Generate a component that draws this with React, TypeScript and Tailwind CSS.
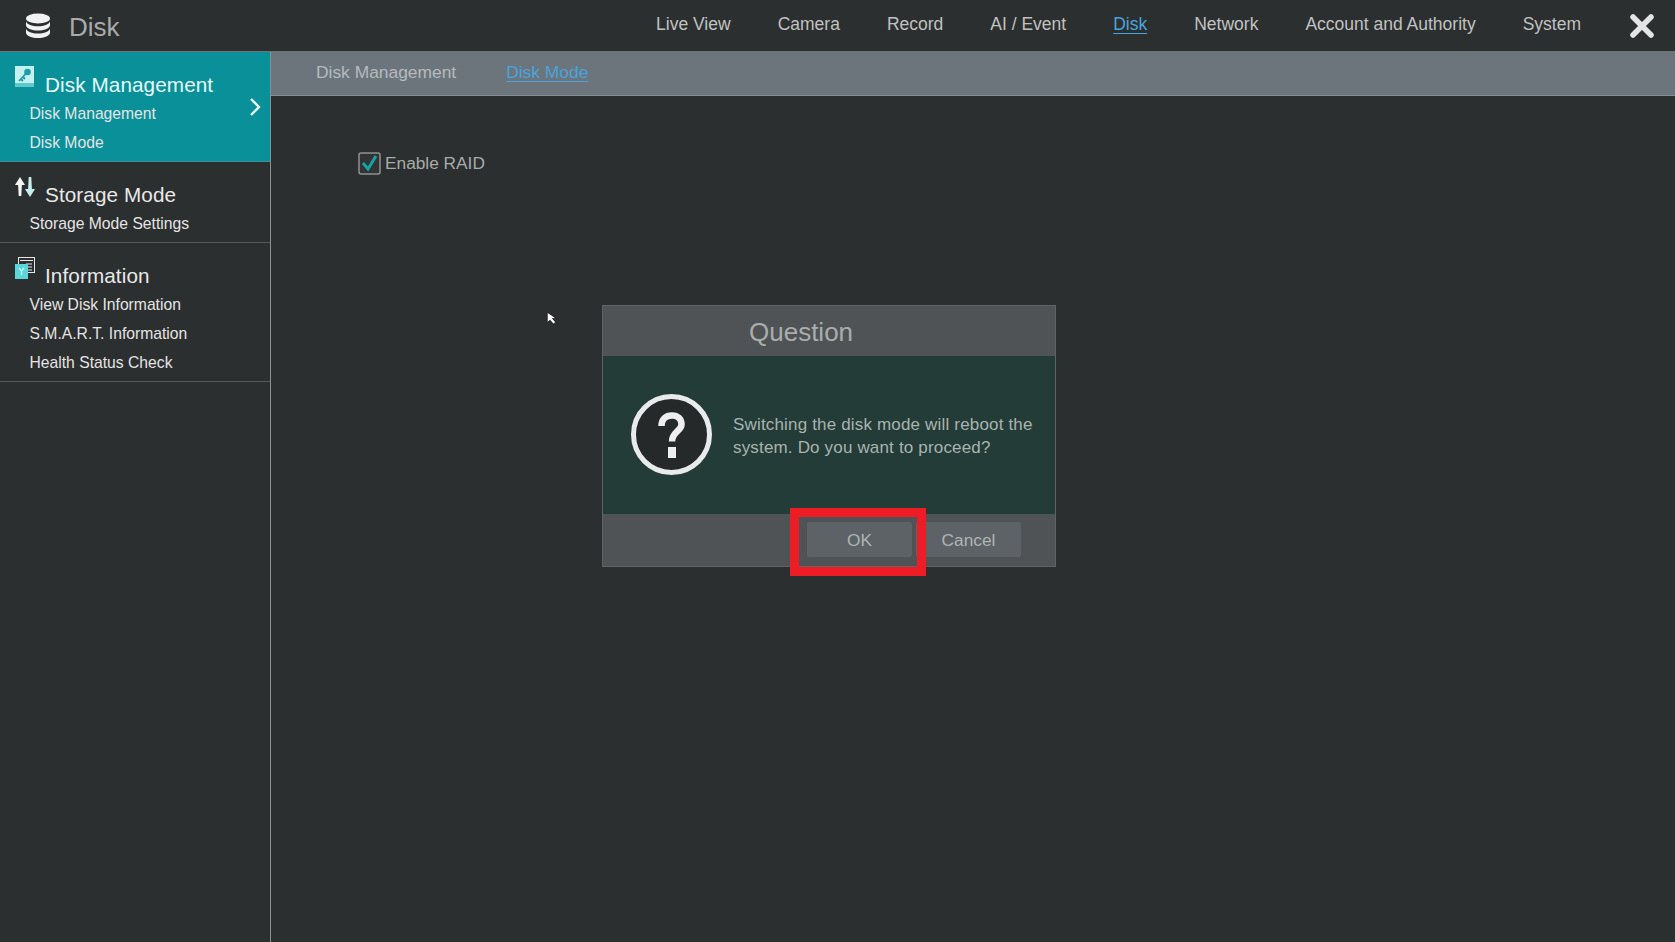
import React from "react";

const font = { fontFamily: '"Liberation Sans", Arial, sans-serif' };

function DbIcon() {
  return (
    <svg width="26" height="26" viewBox="0 0 26 26" fill="#f2f2f2">
      <ellipse cx="13" cy="5.500" rx="12" ry="5" />
      <path d="M1 8.500c1 3 6 4.800 12 4.800s11-1.800 12-4.800v4.300c-1 3-6 4.800-12 4.800s-11-1.800-12-4.800z" />
      <path d="M1 15.800c1 3 6 4.800 12 4.800s11-1.800 12-4.800v4.200c-1 3.300-6 5-12 5s-11-1.700-12-5z" />
    </svg>
  );
}

function KeyIcon() {
  return (
    <svg width="19" height="21" viewBox="0 0 19 21">
      <rect width="19" height="21" fill="#c5f0f1" />
      <rect y="17" width="19" height="4" fill="#5ccacd" />
      <circle cx="12.500" cy="6" r="3.300" fill="#1d9ea6" />
      <path d="M11 7.500 4 15M6 13l2 2M8 11l2 2" stroke="#1d9ea6" strokeWidth="1.800" fill="none" />
    </svg>
  );
}

function ArrowsIcon() {
  return (
    <svg width="20" height="22" viewBox="0 0 20 22">
      <path d="M5 1 10 9H6.900l-.6 11H3.700L3.100 9H0z" fill="#f4f4f4" />
      <path d="M15 21l5-8h-3.100l-.6-12h-2.600l-.6 12H10z" fill="#c4efef" />
    </svg>
  );
}

function InfoIcon() {
  return (
    <svg width="20" height="23" viewBox="0 0 20 23">
      <rect x="3.500" y=".5" width="16" height="15" fill="#2c2f2f" stroke="#e6e6e6" />
      <path d="M5 3.500h13M11 7h6M11 10h6M11 13h6" stroke="#e6e6e6" strokeWidth="1.200" />
      <rect y="7" width="13" height="15" fill="#5cd6d8" />
      <path d="M4 11l2.500 3L9 11M6.500 14v4" stroke="#c8ffff" strokeWidth="1.200" fill="none" />
    </svg>
  );
}

function MenuGroup({
  icon,
  title,
  items,
  active,
  pad,
}: {
  icon: React.ReactNode;
  title: string;
  items: string[];
  active?: boolean;
  pad: string;
}) {
  return (
    <div
      className={
        active
          ? "relative bg-[#0a9099] pl-[15px] pt-[15px] h-[110px] border-b border-[#3f8f96] text-[#e6fbfb] " + pad
          : "relative pl-[15px] pt-[15px] border-b border-[#55595a] text-[#e8e8e8] " + pad
      }
    >
      <div className="flex items-start gap-[11px] h-[27px]">
        <div className="w-[19px] -mt-[1px] shrink-0">{icon}</div>
        <span className="text-[20.700px] leading-[27px] mt-[4px] tracking-[0.1px]">{title}</span>
      </div>
      <div className="pl-[14.500px] mt-[5px]">
        {items.map((t) => (
          <div key={t} className="text-[15.700px] h-[29px] leading-[29px] text-[#e4e4e4]">
            {t}
          </div>
        ))}
      </div>
      {active && (
        <svg className="absolute left-[249px] top-[45px]" width="14" height="20" viewBox="0 0 14 20">
          <path d="M2 2l8 8-8 8" stroke="#eafafa" strokeWidth="2.400" fill="none" />
        </svg>
      )}
    </div>
  );
}

export default function App() {
  const nav = ["Live View", "Camera", "Record", "AI / Event", "Disk", "Network", "Account and Authority", "System"];
  return (
    <div style={font} className="w-[1675px] h-[942px] bg-[#2c2f2f] flex flex-col overflow-hidden relative">
      <header className="h-[52px] shrink-0 flex items-center pl-[25px] border-b border-[#6f7375]">
        <DbIcon />
        <span className="ml-[18px] mt-[3px] text-[26px] text-[#a9abab]">Disk</span>
        <nav className="ml-auto flex items-center gap-[47px] -mt-[3px] text-[17.500px] text-[#c0c2c2]">
          {nav.map((n) =>
            n === "Disk" ? (
              <span key={n} className="text-[#4ba3dc] underline underline-offset-[3px]">
                {n}
              </span>
            ) : (
              <span key={n}>{n}</span>
            )
          )}
        </nav>
        <svg className="ml-[48px] mr-[20px]" width="26" height="26" viewBox="0 0 26 26">
          <path d="M4 4l18 18M22 4 4 22" stroke="#e4e4e4" strokeWidth="5.500" strokeLinecap="round" />
        </svg>
      </header>
      <div className="flex-1 flex min-h-0">
        <aside className="w-[271px] shrink-0 border-r border-[#8b8f90] flex flex-col">
          <MenuGroup active pad="" icon={<KeyIcon />} title="Disk Management" items={["Disk Management", "Disk Mode"]} />
          <MenuGroup pad="pb-[4px]" icon={<ArrowsIcon />} title="Storage Mode" items={["Storage Mode Settings"]} />
          <MenuGroup
            pad="pb-[4px]"
            icon={<InfoIcon />}
            title="Information"
            items={["View Disk Information", "S.M.A.R.T. Information", "Health Status Check"]}
          />
        </aside>
        <main className="flex-1 min-w-0">
          <div className="h-[44px] bg-[#6d757c] border-b border-[#868c91] flex items-center pl-[45px] gap-[50px] text-[17.400px] pb-[3px]">
            <span className="text-[#b6babc]">Disk Management</span>
            <span className="text-[#4ba3dc] underline underline-offset-[3px]">Disk Mode</span>
          </div>
          <div className="ml-[87px] mt-[55px] flex items-center gap-[4px]">
            <svg width="23" height="23" viewBox="0 0 23 23">
              <rect x="1" y="1" width="21" height="21" rx="2" fill="#333" stroke="#8e9192" strokeWidth="1.500" />
              <path d="M5 11l5 6 8-13" stroke="#12a5a5" strokeWidth="3" fill="none" />
            </svg>
            <span className="text-[17.300px] text-[#a8abab]">Enable RAID</span>
          </div>
        </main>
      </div>

      <div className="absolute left-[602px] top-[305px] w-[454px] h-[262px] flex flex-col border border-[#5f6364]">
        <div className="h-[50px] shrink-0 bg-[#4f5355] flex items-center pl-[146px] pt-[2px] text-[26px] text-[#a9adad]">
          Question
        </div>
        <div className="flex-1 bg-[#233c37] flex items-start pt-[38px] pl-[28px]">
          <div className="w-[81px] h-[81px] rounded-full bg-[#25292a] border-[5px] border-[#e9eaea] flex items-center justify-center shrink-0">
            <svg width="27" height="46" viewBox="0 0 27 46">
              <path d="M3.500 14C3.500 7 8 3.500 14 3.500S23.500 7 23.500 12.500C23.500 19 14 20 14 29.500" stroke="#eeeeee" strokeWidth="6.500" fill="none" />
              <rect x="10" y="35" width="8" height="11" fill="#eeeeee" />
            </svg>
          </div>
          <p className="ml-[21px] mt-[19px] w-[312px] text-[17px] leading-[23px] text-[#a9b3b0] tracking-[0.17px]">
            Switching the disk mode will reboot the system. Do you want to proceed?
          </p>
        </div>
        <div className="h-[52px] shrink-0 bg-[#4f5355] flex justify-end items-start pt-[8px] pr-[34px] gap-[4px] text-[17.300px] text-[#b0b4b4]">
          <div className="w-[105px] h-[35px] pt-[3px] rounded-[2px] bg-[#5c6266] flex items-center justify-center">OK</div>
          <div className="w-[105px] h-[35px] pt-[3px] rounded-[2px] bg-[#5c6266] flex items-center justify-center">
            Cancel
          </div>
        </div>
      </div>

      <div className="absolute left-[790px] top-[508px] w-[136px] h-[68px] border-[9px] border-[#ee1c25]" />

      <svg className="absolute left-[546px] top-[311px]" width="14" height="14" viewBox="0 0 11 11">
        <path d="M1 1v8l2.200-1.800 2.600 3 1.800-1.400-2.600-3H8z" fill="#fff" stroke="#000" strokeWidth=".5" />
      </svg>
    </div>
  );
}
